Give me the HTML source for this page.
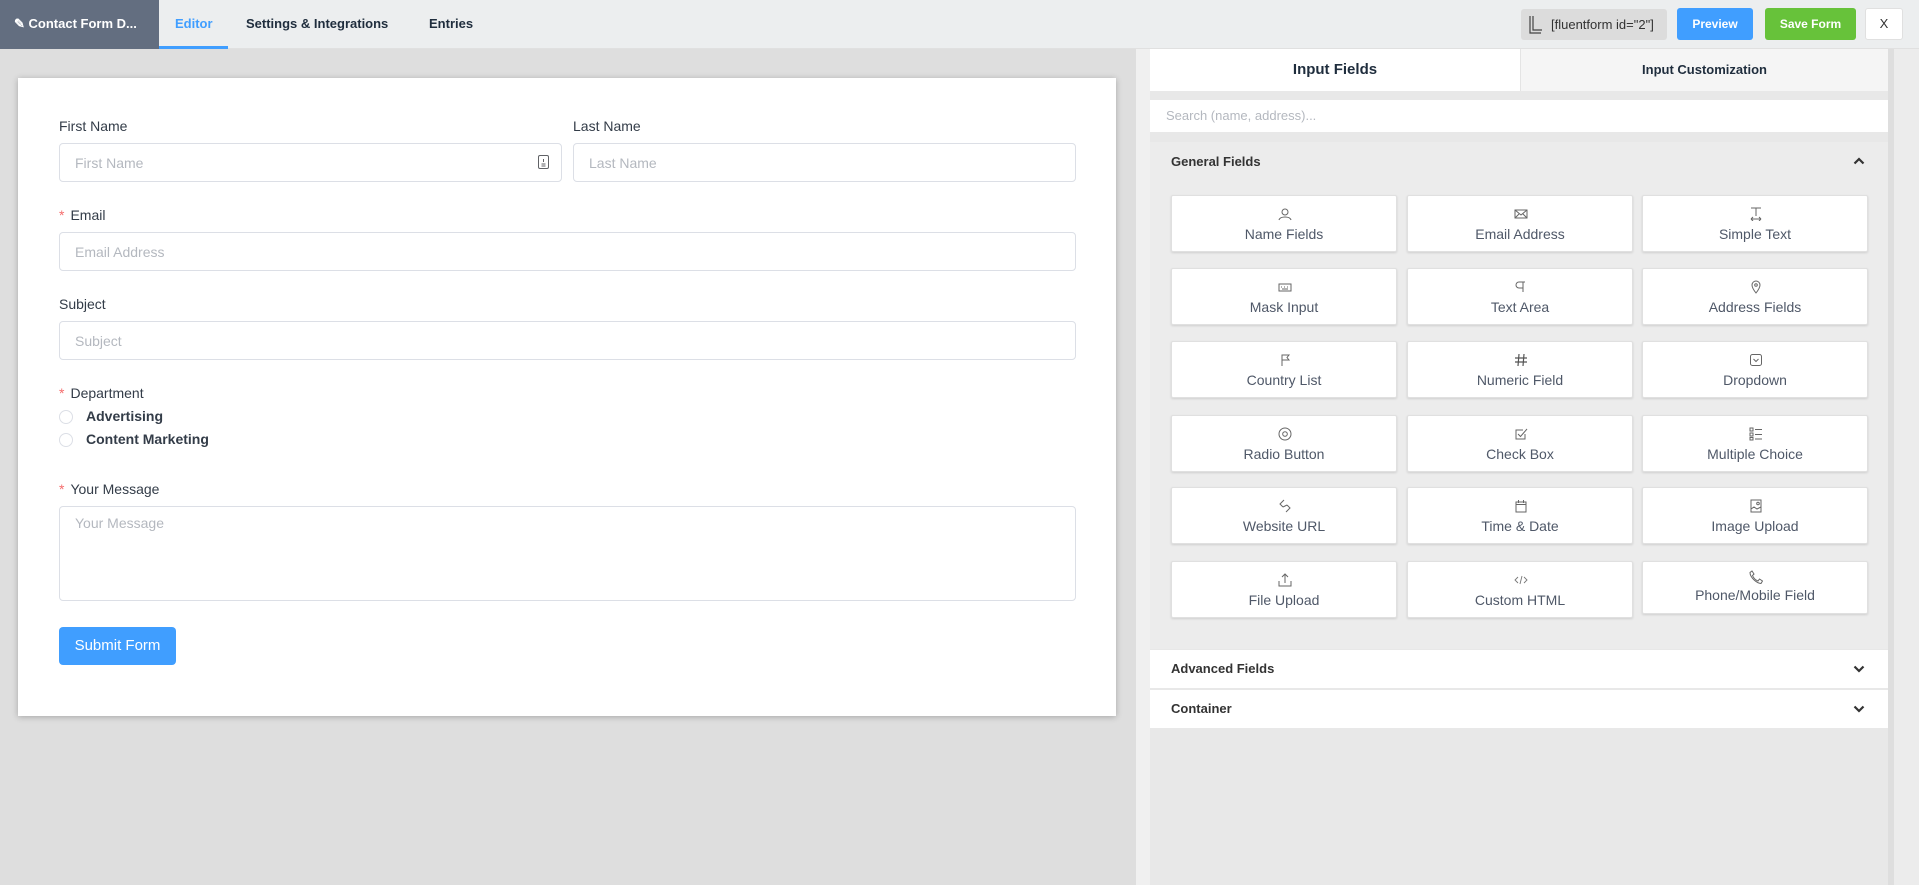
<!DOCTYPE html>
<html><head><meta charset="utf-8"><style>
*{box-sizing:border-box;margin:0;padding:0}
body{width:1919px;height:885px;overflow:hidden;background:#dedede;font-family:"Liberation Sans",sans-serif;position:relative;color:#1f2d3d}
.abs{position:absolute}
.top{left:0;top:0;width:1919px;height:49px;background:#eceeef;border-bottom:1px solid #e0e0e0}
.title{left:0;top:0;width:159px;height:49px;background:#636e80;color:#fff;font-size:13px;font-weight:bold;line-height:48px;padding-left:14px}
.tab{top:0;height:49px;line-height:48px;font-size:13px;font-weight:bold;color:#1f2d3d}
.card{left:18px;top:78px;width:1098px;height:638px;background:#fff;box-shadow:0 1px 6px rgba(0,0,0,.25)}
.lbl{font-size:14px;color:#333c48}
.req{color:#f56c6c;margin-right:6px}
.inp{border:1px solid #dcdfe6;border-radius:4px;background:#fff;font-size:14px;color:#b4b8bf;padding-left:15px;line-height:38px}
.radio{width:14px;height:14px;border:1px solid #dcdfe6;border-radius:50%}
.rl{font-size:14px;color:#333c48;font-weight:bold}
.panel{left:1150px;top:49px;width:738px;height:836px;background:#e8e8e8}
.fc{width:226px;height:57px;background:#fff;border:1px solid #e0e0e0;border-radius:2px;box-shadow:0 1px 2px rgba(0,0,0,.12);text-align:center;font-size:14px;color:#4f5868}
.fc svg{position:absolute;left:106px;top:11px}
.fc span{position:absolute;left:0;right:0;top:30px}
.sec{left:1150px;width:738px;background:#fff;font-size:13px;font-weight:bold;color:#333;padding-left:21px}
</style></head><body>
<div class="abs top"></div>
<div class="abs title">✎ Contact Form D...</div>
<div class="abs tab" style="left:175px;color:#409eff">Editor</div>
<div class="abs" style="left:159px;top:46px;width:69px;height:3px;background:#409eff"></div>
<div class="abs tab" style="left:246px">Settings &amp; Integrations</div>
<div class="abs tab" style="left:429px">Entries</div>
<div class="abs" style="left:1521px;top:9px;width:146px;height:31px;background:#dcdcdc;border-radius:3px;font-size:13px;color:#333;line-height:31px;padding-left:30px">[fluentform id="2"]</div>
<svg class="abs" style="left:1528px;top:15px" width="14" height="20"><path d="M2 1v17h11M5 1v14h9" fill="none" stroke="#444" stroke-width="1.2"/></svg>
<div class="abs" style="left:1677px;top:8px;width:76px;height:32px;background:#409eff;border-radius:3px;color:#fff;font-size:12px;font-weight:bold;text-align:center;line-height:32px">Preview</div>
<div class="abs" style="left:1765px;top:8px;width:91px;height:32px;background:#67c23a;border-radius:3px;color:#fff;font-size:12px;font-weight:bold;text-align:center;line-height:32px">Save Form</div>
<div class="abs" style="left:1865px;top:8px;width:38px;height:32px;background:#fff;border:1px solid #e0e0e0;border-radius:3px;color:#333;font-size:13px;text-align:center;line-height:30px">X</div>

<div class="abs card"></div>
<div class="abs lbl" style="left:59px;top:118px">First Name</div>
<div class="abs inp" style="left:59px;top:143px;width:503px;height:39px">First Name</div>
<svg class="abs" style="left:538px;top:155px" width="11" height="14"><rect x=".5" y=".5" width="10" height="13" rx="1.5" fill="none" stroke="#606266"/><path d="M5.5 4v3M3.5 9h4M3.5 11h4" stroke="#606266"/></svg>
<div class="abs lbl" style="left:573px;top:118px">Last Name</div>
<div class="abs inp" style="left:573px;top:143px;width:503px;height:39px">Last Name</div>
<div class="abs lbl" style="left:59px;top:207px"><span class="req">*</span>Email</div>
<div class="abs inp" style="left:59px;top:232px;width:1017px;height:39px">Email Address</div>
<div class="abs lbl" style="left:59px;top:296px">Subject</div>
<div class="abs inp" style="left:59px;top:321px;width:1017px;height:39px">Subject</div>
<div class="abs lbl" style="left:59px;top:385px"><span class="req">*</span>Department</div>
<div class="abs radio" style="left:59px;top:410px"></div><div class="abs rl" style="left:86px;top:408px">Advertising</div>
<div class="abs radio" style="left:59px;top:433px"></div><div class="abs rl" style="left:86px;top:431px">Content Marketing</div>
<div class="abs lbl" style="left:59px;top:481px"><span class="req">*</span>Your Message</div>
<div class="abs inp" style="left:59px;top:506px;width:1017px;height:95px;line-height:32px">Your Message</div>
<div class="abs" style="left:59px;top:627px;width:117px;height:38px;background:#409eff;border-radius:4px;color:#fff;font-size:15px;text-align:center;line-height:38px">Submit Form</div>

<div class="abs" style="left:1136px;top:49px;width:14px;height:836px;background:#f0f0f0"></div>
<div class="abs panel"></div>
<div class="abs" style="left:1894px;top:49px;width:25px;height:836px;background:#ececec"></div>
<div class="abs" style="left:1150px;top:49px;width:370px;height:42px;background:#fff;font-size:15px;font-weight:bold;text-align:center;line-height:42px;color:#1f2d3d">Input Fields</div>
<div class="abs" style="left:1520px;top:49px;width:368px;height:42px;background:#f5f5f5;border-left:1px solid #e4e4e4;font-size:13px;font-weight:bold;text-align:center;line-height:42px;color:#1f2d3d">Input Customization</div>
<div class="abs" style="left:1150px;top:100px;width:738px;height:32px;background:#fff;font-size:13px;color:#b4b8bf;line-height:32px;padding-left:16px">Search (name, address)...</div>
<div class="abs" style="left:1150px;top:142px;width:738px;height:507px;background:#ececec"></div>
<div class="abs" style="left:1171px;top:154px;font-size:13px;font-weight:bold;color:#333">General Fields</div>
<svg class="abs" style="left:1853px;top:156px" width="12" height="9"><path d="M1.5 7.5L6 3l4.5 4.5" fill="none" stroke="#333" stroke-width="2.2"/></svg>

<div class="abs fc" style="left:1171px;top:195px"><svg width="14" height="14"><circle cx="7" cy="5" r="3" fill="none" stroke="#666"/><path d="M1 13c1-4 11-4 12 0" fill="none" stroke="#666"/></svg><span>Name Fields</span></div>
<div class="abs fc" style="left:1407px;top:195px"><svg width="14" height="14"><rect x="1" y="3" width="12" height="8" fill="none" stroke="#666"/><path d="M1 3l6 5 6-5M1 11l4-4M13 11l-4-4" fill="none" stroke="#666"/></svg><span>Email Address</span></div>
<div class="abs fc" style="left:1642px;top:195px"><svg width="14" height="14"><path d="M2 1h10M7 1v8M2 12h10M2 12l2-2M2 12l2 2M12 12l-2-2M12 12l-2 2" fill="none" stroke="#666"/></svg><span>Simple Text</span></div>

<div class="abs fc" style="left:1171px;top:268px"><svg width="14" height="14"><rect x="1" y="4" width="12" height="7" fill="none" stroke="#666"/><path d="M3 7h1M6 7h1M9 7h1M4 9h6" stroke="#666"/></svg><span>Mask Input</span></div>
<div class="abs fc" style="left:1407px;top:268px"><svg width="14" height="14"><path d="M5 2h6M9 2v10M5 2a3 3 0 0 0 0 6h4" fill="none" stroke="#666"/></svg><span>Text Area</span></div>
<div class="abs fc" style="left:1642px;top:268px"><svg width="14" height="14"><path d="M7 13C3 8 3 6 3 5a4 4 0 0 1 8 0c0 1 0 3-4 8z" fill="none" stroke="#666"/><circle cx="7" cy="5" r="1.3" fill="none" stroke="#666"/></svg><span>Address Fields</span></div>

<div class="abs fc" style="left:1171px;top:341px"><svg width="14" height="14"><path d="M4 13V2h7l-2 2.5L11 7H4" fill="none" stroke="#666"/></svg><span>Country List</span></div>
<div class="abs fc" style="left:1407px;top:341px"><svg width="14" height="14"><path d="M5 1L4 13M10 1L9 13M1 5h12M1 9h12" fill="none" stroke="#555" stroke-width="1.2"/></svg><span>Numeric Field</span></div>
<div class="abs fc" style="left:1642px;top:341px"><svg width="14" height="14"><rect x="1.5" y="1.5" width="11" height="11" rx="2" fill="none" stroke="#666"/><path d="M4.5 6l2.5 2.5L9.5 6" fill="none" stroke="#666"/></svg><span>Dropdown</span></div>

<div class="abs fc" style="left:1171px;top:415px"><svg width="14" height="14"><circle cx="7" cy="7" r="6" fill="none" stroke="#666"/><circle cx="7" cy="7" r="2.3" fill="none" stroke="#666"/></svg><span>Radio Button</span></div>
<div class="abs fc" style="left:1407px;top:415px"><svg width="14" height="14"><path d="M11 7v5H2V3h7" fill="none" stroke="#666"/><path d="M4 7l2.5 2.5L13 2" fill="none" stroke="#666"/></svg><span>Check Box</span></div>
<div class="abs fc" style="left:1642px;top:415px"><svg width="14" height="14"><rect x="1" y="1" width="3" height="3" fill="none" stroke="#666"/><rect x="1" y="6" width="3" height="3" fill="none" stroke="#666"/><rect x="1" y="10.5" width="3" height="2.5" fill="none" stroke="#666"/><path d="M6 2.5h7M6 7.5h7M6 12h7" stroke="#666"/></svg><span>Multiple Choice</span></div>

<div class="abs fc" style="left:1171px;top:487px"><svg width="14" height="14"><path d="M6 1L2 5l3 3M8 13l4-4-3-3M5 8l4-2" fill="none" stroke="#666"/></svg><span>Website URL</span></div>
<div class="abs fc" style="left:1407px;top:487px"><svg width="14" height="14"><rect x="2" y="3" width="10" height="10" fill="none" stroke="#666"/><path d="M2 5.5h10M4.5 1v3M9.5 1v3" stroke="#666"/></svg><span>Time &amp; Date</span></div>
<div class="abs fc" style="left:1642px;top:487px"><svg width="14" height="14"><rect x="2" y="1" width="10" height="12" fill="none" stroke="#666"/><circle cx="9" cy="4.5" r="1.3" fill="none" stroke="#666"/><path d="M2 10l3-2 3 2 4-2" fill="none" stroke="#666"/></svg><span>Image Upload</span></div>

<div class="abs fc" style="left:1171px;top:561px"><svg width="14" height="14"><path d="M7 10V1M4 4l3-3 3 3M1 8v5h12V8" fill="none" stroke="#666"/></svg><span>File Upload</span></div>
<div class="abs fc" style="left:1407px;top:561px"><svg width="14" height="14"><path d="M4 4L1 7l3 3M10 4l3 3-3 3M8 3L6 11" fill="none" stroke="#777" stroke-width=".9"/></svg><span>Custom HTML</span></div>
<div class="abs fc" style="left:1642px;top:561px;height:53px"><svg width="14" height="14" style="top:8px"><path d="M3 1l2 3-1.5 1.5c1 2.5 3 4.5 5.5 5.5L10.5 9l3 2-1.5 2.5C7 13 1 7 1 2.5z" fill="none" stroke="#666"/></svg><span style="top:25px">Phone/Mobile Field</span></div>

<div class="abs sec" style="top:650px;height:38px;line-height:38px">Advanced Fields</div>
<svg class="abs" style="left:1853px;top:665px" width="12" height="9"><path d="M1.5 1.5L6 6l4.5-4.5" fill="none" stroke="#333" stroke-width="2.2"/></svg>
<div class="abs sec" style="top:690px;height:38px;line-height:38px">Container</div>
<svg class="abs" style="left:1853px;top:705px" width="12" height="9"><path d="M1.5 1.5L6 6l4.5-4.5" fill="none" stroke="#333" stroke-width="2.2"/></svg>
</body></html>
